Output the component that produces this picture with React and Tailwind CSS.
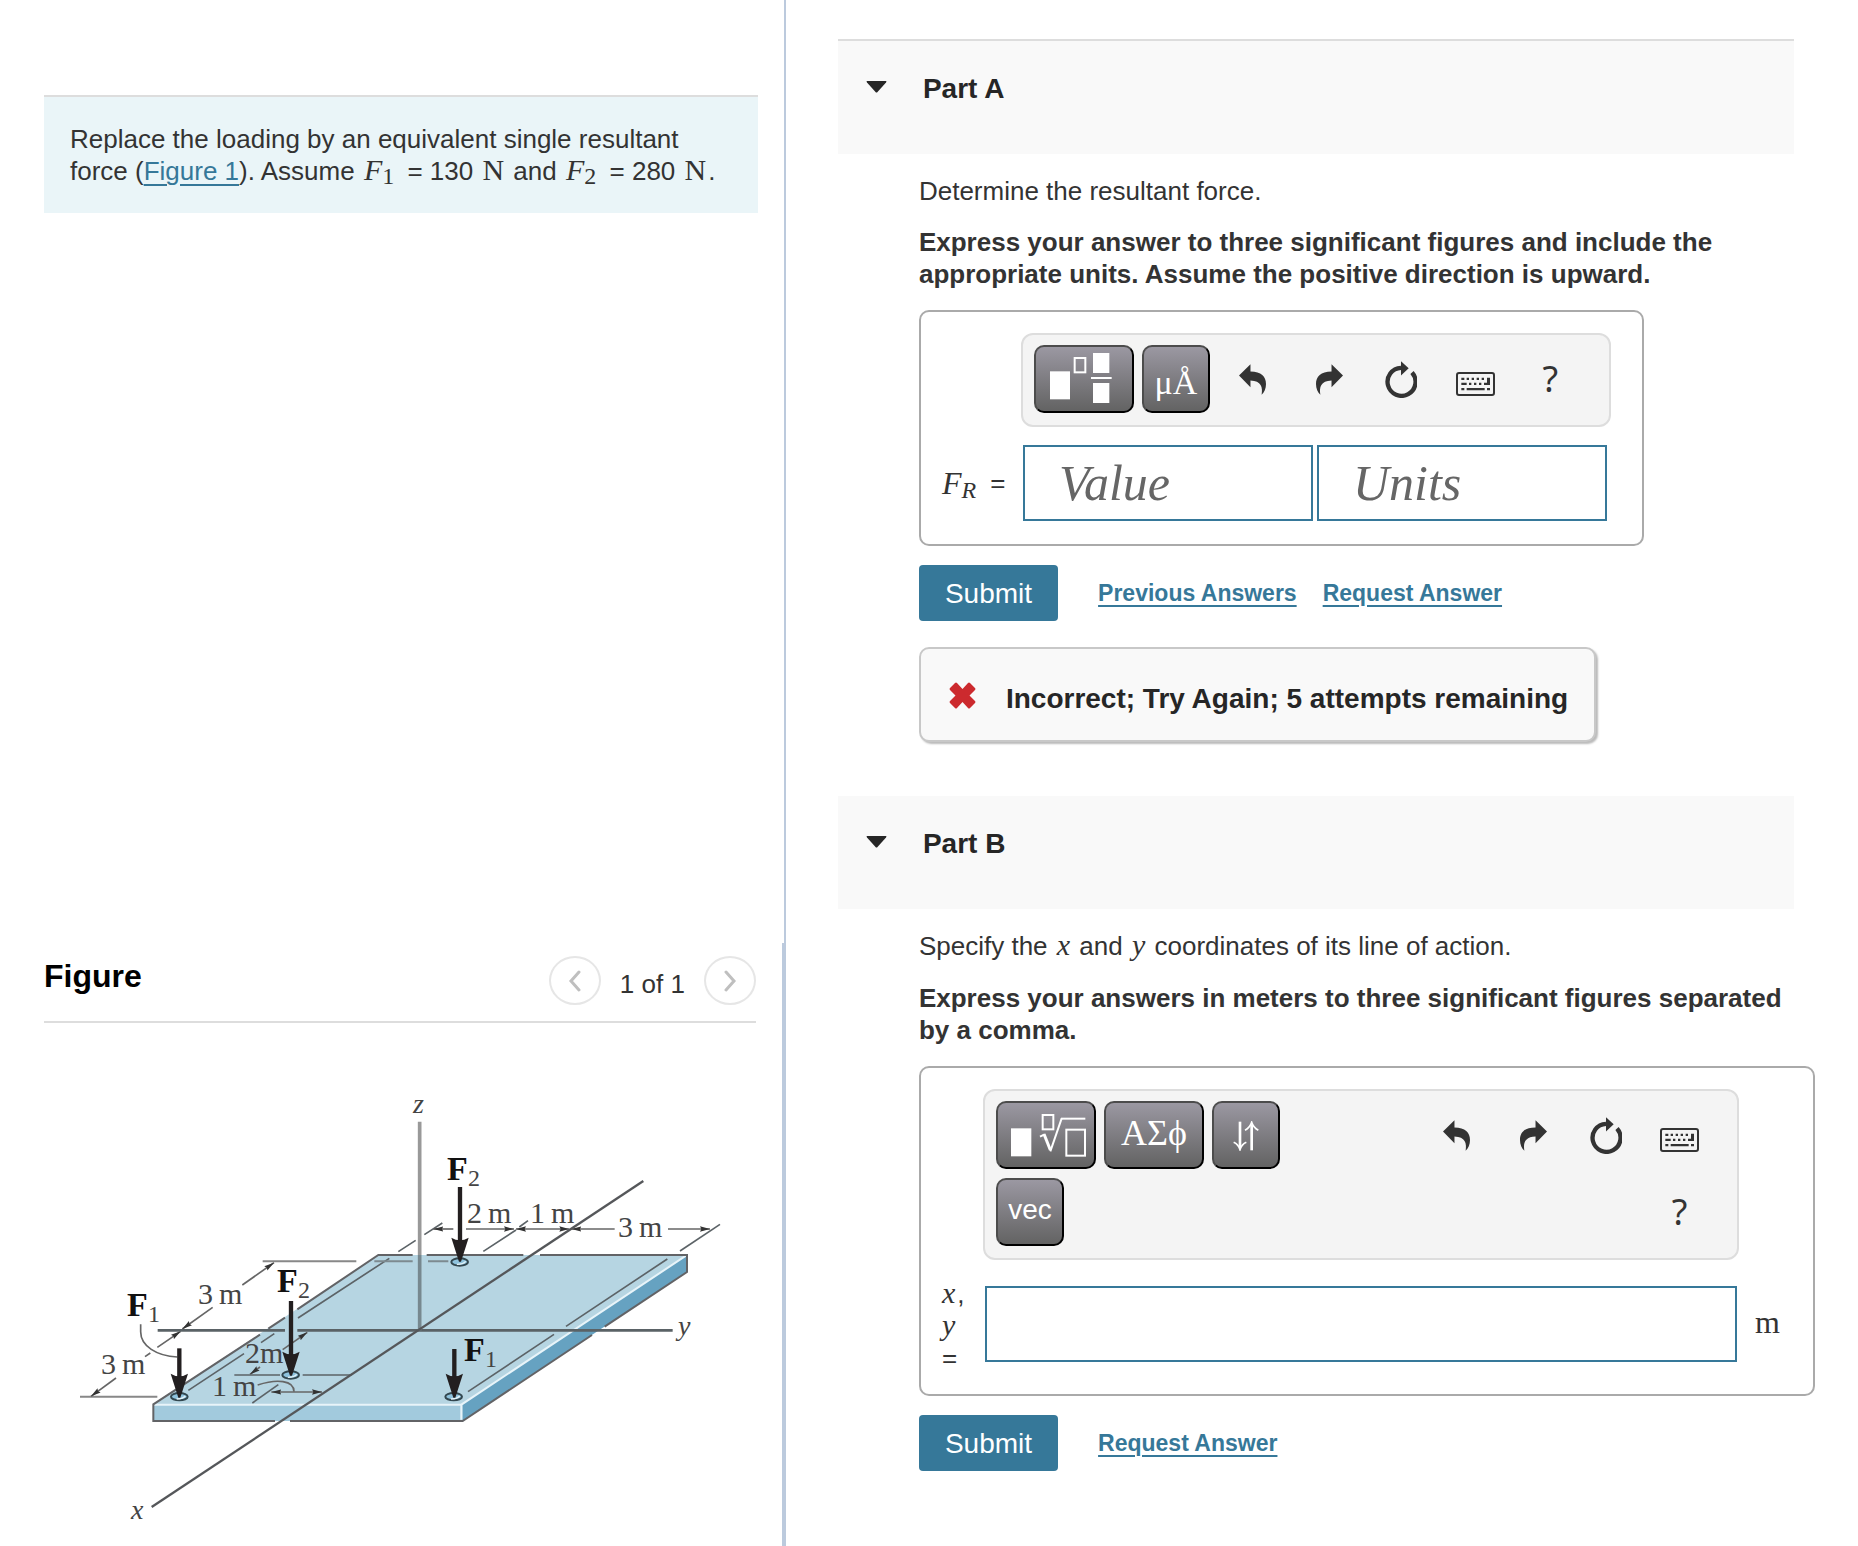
import React from "react";

const SANS = "font-['Liberation_Sans',Arial,sans-serif]";
const MATH = "font-['Liberation_Serif','Times_New_Roman',serif]";

function MathText({ children, sub, upright }) {
  return (
    <span className={`${MATH} mx-0.5 text-[30px] leading-none ${upright ? "" : "italic"}`}>
      {children}
      {sub && <span className="relative top-1 mr-1 text-[24px] not-italic">{sub}</span>}
    </span>
  );
}

function UndoIcon({ flip }) {
  return (
    <svg width="27" height="31" viewBox="0 0 80 90" fill="#333" aria-hidden="true" className={flip ? "ml-1 -scale-x-100" : ""}>
      <path d="M0 33 L34 0 V21 C66 21 80 36 80 58 C80 72 75 82 67 90 C71 68 66 49 34 48 V68 Z" />
    </svg>
  );
}

function ResetIcon() {
  return (
    <svg width="32" height="37" viewBox="0 0 96 110" aria-hidden="true" className="mr-0.5">
      <path d="M81 34 A42 42 0 1 1 48 20" fill="none" stroke="#333" strokeWidth="13" />
      <path d="M48 0 L71 21 L48 43 Z" fill="#333" />
    </svg>
  );
}

function KeyboardIcon() {
  return (
    <svg width="39" height="24" viewBox="0 0 117 72" aria-hidden="true" className="mt-2.5 mr-1">
      <rect x="3" y="3" width="111" height="66" rx="6" fill="none" stroke="#333" strokeWidth="6" />
      <path
        fill="#333"
        d="M16 17h9v7h-9z M32 17h7v7h-7z M47 17h7v7h-7z M62 17h7v7h-7z M77 17h7v7h-7z M93 17h9v22h-18v-7h9z M16 32h16v7H16z M39 32h7v7h-7z M54 32h7v7h-7z M69 32h7v7h-7z M16 48h9v7h-9z M32 48h54v7H32z M93 48h9v7h-9z"
      />
    </svg>
  );
}

function ToolIcon({ label, children }) {
  return (
    <button type="button" aria-label={label} className="flex h-[68px] w-[75px] items-center justify-center">
      {children}
    </button>
  );
}

function HelpIcon() {
  return (
    <ToolIcon label="Help">
      <span className="mr-1 font-['Noto_Sans','Liberation_Sans',sans-serif] text-[36px] leading-9 text-[#333]">?</span>
    </ToolIcon>
  );
}

function HistoryTools() {
  return (
    <>
      <ToolIcon label="Undo"><UndoIcon /></ToolIcon>
      <ToolIcon label="Redo"><UndoIcon flip /></ToolIcon>
      <ToolIcon label="Reset"><ResetIcon /></ToolIcon>
      <ToolIcon label="Keyboard shortcuts"><KeyboardIcon /></ToolIcon>
    </>
  );
}

function PadButton({ label, wide, children }) {
  return (
    <button
      type="button"
      aria-label={label}
      className={`flex h-[68px] items-center justify-center rounded-[10px] border-2 border-t-[#4c4c4c] border-r-black border-b-black border-l-[#4c4c4c] bg-linear-to-b from-[#9b98a2] to-[#636363] text-white ${
        wide ? "w-[100px]" : "w-[68px]"
      }`}
    >
      {children}
    </button>
  );
}

function TemplateIcon() {
  return (
    <svg width="62" height="50" viewBox="0 0 186 150" aria-hidden="true" className="mr-1.5 mb-0.5">
      <g fill="#fff">
        <rect x="0" y="55" width="60" height="84" />
        <rect x="129" y="0" width="49" height="60" />
        <rect x="123" y="72" width="62" height="6" />
        <rect x="129" y="90" width="49" height="60" />
      </g>
      <rect x="74" y="15" width="32" height="43" fill="none" stroke="#fff" strokeWidth="6" />
    </svg>
  );
}

function RootIcon() {
  return (
    <svg width="75" height="43" viewBox="0 0 225 129" aria-hidden="true" className="ml-1.5 shrink-0">
      <rect x="0" y="43" width="61" height="84" fill="#fff" />
      <g fill="none" stroke="#fff" strokeWidth="6">
        <rect x="95" y="3" width="32" height="43" />
        <rect x="166" y="47" width="56" height="78" />
        <path d="M150 14 H223" />
        <path d="M87 68 L101 61" />
        <path d="M99 60 L118 108" strokeWidth="9" />
        <path d="M118 112 L152 13" />
      </g>
    </svg>
  );
}

function ArrowsIcon() {
  return (
    <svg width="26" height="30" viewBox="0 0 78 90" fill="none" stroke="#fff" aria-hidden="true" className="mt-0.5">
      <g strokeWidth="8">
        <path d="M21 2 V80" />
        <path d="M56 88 V10" />
      </g>
      <g strokeWidth="5">
        <path d="M2 64 Q16 70 21 86 Q26 70 40 64" />
        <path d="M36 28 Q51 20 56 4 Q61 20 76 28" />
      </g>
    </svg>
  );
}

function PartHeader({ title, line }) {
  return (
    <h2 className={`mr-16 bg-[#f9f9f9] ${line ? "border-t-2 border-[#ddd]" : ""}`}>
      <button type="button" aria-expanded="true" className="flex h-[113px] w-full items-start pt-8 pl-7 text-left">
        <svg width="21" height="12" viewBox="0 0 21 12" aria-hidden="true" className="mt-2">
          <path d="M1 0 H20 Q21 0 20 1.5 L11.5 11 Q10.5 12 9.5 11 L1 1.5 Q0 0 1 0 Z" fill="#262626" />
        </svg>
        <span className="ml-9 text-[28px] leading-8 font-bold text-[#262626]">{title}</span>
      </button>
    </h2>
  );
}

function Submit() {
  return (
    <button type="submit" className="h-14 rounded-[4px] bg-[#367899] px-[26px] pt-0.5 text-[28px] leading-8 text-white">
      Submit
    </button>
  );
}

function ActionLink({ children }) {
  return (
    <a href="#answers" className="text-[23px] leading-7 font-bold text-[#367899] underline decoration-2 underline-offset-4">
      {children}
    </a>
  );
}

const FIELD =
  "h-[76px] w-0 min-w-0 border-2 border-[#367899] bg-white font-['Liberation_Serif','Times_New_Roman',serif] text-[50px] italic outline-none placeholder:text-[#666] placeholder:opacity-100";

function Force({ x, y1, y2 }) {
  return (
    <g>
      <path d={`M${x} ${y1} V${y2 - 50}`} stroke="#231f20" strokeWidth="13" />
      <path d={`M${x - 26} ${y2 - 72} Q${x} ${y2 - 56} ${x + 26} ${y2 - 72} L${x + 3} ${y2} H${x - 3} Z`} fill="#231f20" />
    </g>
  );
}

function Hole({ x, y }) {
  return (
    <g>
      <ellipse cx={x} cy={y} rx="25" ry="11" fill="#8fc3dd" stroke="#33474f" strokeWidth="6" />
      <path d={`M${x - 8} ${y + 7} Q${x + 12} ${y + 6} ${x + 18} ${y - 2}`} stroke="#e6f3f8" strokeWidth="4" fill="none" />
    </g>
  );
}

function ForceLabel({ x, y, n }) {
  return (
    <>
      <text x={x} y={y} fontSize="34" fontWeight="700" fill="#111">F</text>
      <text x={x + 21} y={y + 6} fontSize="24">{n}</text>
    </>
  );
}

function PlateDiagram() {
  return (
    <svg
      viewBox="0 0 680 460"
      role="img"
      aria-label="Plate loaded by forces F1 and F2"
      className="mt-[58px] ml-4 w-[680px] max-w-full"
    >
      <defs>
        <marker id="tip" viewBox="0 0 30 16" refX="30" refY="8" markerWidth="30" markerHeight="18" markerUnits="userSpaceOnUse" orient="auto-start-reverse">
          <path d="M0 0 L30 8 L0 16 L4 8 Z" fill="#333" />
        </marker>
      </defs>
      <g transform="scale(0.33333)" fill="none">
        <path d="M280 970 L955 522 H1880 L1207 970 Z" fill="#b6d5e2" />
        <path d="M280 970 H1207 V1020 H280 Z" fill="#a2cadd" />
        <path d="M1207 970 L1880 522 V573 L1207 1020 Z" fill="#66a2c1" />
        <path d="M282 971 H1204 L1878 524 M1204 971 V1016" stroke="#e8f4f9" strokeWidth="6" />
        <g stroke="#626366" strokeWidth="6">
          <path d="M645 1020 H280 V970 L600 761 M625 743 L675 710 M712 685 L955 522 H1058 M1100 522 H1390 M1440 522 H1881 V573 L1634 737 M1596 762 L1208 1020 H690" />
        </g>
        <g stroke="#5c6367" strokeWidth="5">
          <path d="M385 928 L552 818 M603 785 L643 758 M714 711 L988 532" />
          <path d="M1224 932 L1482 760 M1518 736 L1822 534" />
          <path d="M943 541 H1058 M1104 541 H1165" stroke="#7d8a90" strokeWidth="6" />
          <path d="M1015 512 L1067 478 M1093 461 L1147 426" />
          <path d="M1270 511 L1368 447 M1378 438 L1404 419" />
          <path d="M1860 510 L1980 430" />
          <path d="M523 882 H660 M728 882 H875" />
          <path d="M577 966 L655 911" />
        </g>
        <g stroke="#888" strokeWidth="6">
          <path d="M608 541 H889 M60 947 H292" />
        </g>
        <g stroke="#666" strokeWidth="5">
          <path d="M547 612 L642 545" markerEnd="url(#tip)" />
          <path d="M458 679 L367 744" markerEnd="url(#tip)" />
          <path d="M255 827 L271 816 M292 799 L362 751" markerEnd="url(#tip)" />
          <path d="M168 891 L93 946" markerEnd="url(#tip)" />
          <path d="M600 858 L570 880" markerEnd="url(#tip)" />
          <path d="M668 806 L742 754" markerEnd="url(#tip)" />
          <path d="M634 933 H786" markerStart="url(#tip)" markerEnd="url(#tip)" />
          <path d="M1180 444 H1120" markerEnd="url(#tip)" />
          <path d="M1218 444 H1362" markerEnd="url(#tip)" />
          <path d="M1368 444 H1528" markerStart="url(#tip)" markerEnd="url(#tip)" />
          <path d="M1664 444 H1534" markerEnd="url(#tip)" />
          <path d="M1824 444 H1950" markerEnd="url(#tip)" />
          <path d="M242 730 V752 C242 795 290 825 352 828" />
          <path d="M593 912 C650 893 702 897 702 932" />
        </g>
        <g stroke="#5a6266">
          <path d="M293 748 H675 M712 748 H1838" strokeWidth="8" />
          <path d="M1079 122 V522" stroke="#999" strokeWidth="11" />
          <path d="M1079 522 V748" stroke="#77888f" strokeWidth="11" />
          <path d="M275 1278 L1750 300" stroke="#55575a" strokeWidth="7" />
        </g>
        <Hole x={358} y={947} />
        <Hole x={692} y={882} />
        <Hole x={1199} y={543} />
        <Hole x={1181} y={947} />
        <Force x={358} y1={802} y2={950} />
        <Force x={693} y1={660} y2={884} />
        <Force x={1200} y1={318} y2={542} />
        <Force x={1183} y1={804} y2={950} />
      </g>
      <g className={MATH} fill="#444" fontSize="30">
        <ForceLabel x={67} y={235} n="1" />
        <ForceLabel x={217} y={211} n="2" />
        <ForceLabel x={387} y={99} n="2" />
        <ForceLabel x={404} y={280} n="1" />
        <text x="138" y="223">3{"\u2009"}m</text>
        <text x="41" y="293">3{"\u2009"}m</text>
        <text x="185" y="282">2m</text>
        <text x="152" y="315">1{"\u2009"}m</text>
        <text x="407" y="142">2{"\u2009"}m</text>
        <text x="470" y="142">1{"\u2009"}m</text>
        <text x="558" y="156">3{"\u2009"}m</text>
        <g fontSize="28" fontStyle="italic">
          <text x="353" y="32">z</text>
          <text x="618" y="254">y</text>
          <text x="71" y="438">x</text>
        </g>
      </g>
    </svg>
  );
}

function PagerButton({ label, d }) {
  return (
    <button type="button" aria-label={label} className="flex h-[49px] w-[52px] items-center justify-center rounded-[50%] border-2 border-[#e6e6e6]">
      <svg width="14" height="22" viewBox="0 0 14 22" fill="none" stroke="#bfbfbf" strokeWidth="3" strokeLinecap="round" aria-hidden="true">
        <path d={d} />
      </svg>
    </button>
  );
}

function LeftPane() {
  return (
    <section className="flex w-[42.3%] shrink-0 flex-col">
      <div className="min-h-[943px] border-r-2 border-[#bccadd] pt-[95px] pr-[26px] pl-11">
        <p className="border-t-2 border-[#ddd] bg-[#eaf5f8] p-[26px] text-[26px] leading-8 text-[#333]">
          Replace the loading by an equivalent single resultant force (
          <a href="#figure" className="text-[#367899] underline decoration-2 underline-offset-4">Figure 1</a>). Assume{" "}
          <MathText sub="1">F</MathText> = 130 <MathText upright>N</MathText> and{" "}
          <MathText sub="2">F</MathText> = 280 <MathText upright>N</MathText>.
        </p>
      </div>
      <div id="figure" className="grow border-r-4 border-[#bccadd] pt-[13px] pr-[26px] pl-11">
        <div className="flex items-start border-b-2 border-[#ddd] pb-4">
          <h2 className="grow text-[32px] leading-10 font-bold text-black">Figure</h2>
          <PagerButton label="Previous figure" d="M11 2 L3 11 L11 20" />
          <span className="mx-[19px] mt-3 text-[26px] leading-8 text-[#333]">1 of 1</span>
          <PagerButton label="Next figure" d="M3 2 L11 11 L3 20" />
        </div>
        <PlateDiagram />
      </div>
    </section>
  );
}

function PartA() {
  return (
    <form onSubmit={(e) => e.preventDefault()}>
      <PartHeader title="Part A" line />
      <div className="mr-16 ml-[81px] text-[26px] leading-8 text-[#333]">
        <p className="mt-[21px]">Determine the resultant force.</p>
        <p className="mt-[19px] font-bold">
          Express your answer to three significant figures and include the appropriate units. Assume the positive
          direction is upward.
        </p>
        <div className="mt-5 w-[725px] max-w-full rounded-[10px] border-2 border-[#aaa] pt-[21px] pb-[23px]">
          <div className="mr-[31px] ml-[100px] flex rounded-xl border-2 border-[#ddd] bg-[#f4f4f4] px-[11px] pt-2.5 pb-3">
            <div className="flex gap-2">
              <PadButton label="Templates" wide><TemplateIcon /></PadButton>
              <PadButton label="Units symbols"><span className={`${MATH} mt-2 text-[34px]`}>μÅ</span></PadButton>
            </div>
            <div className="ml-[5px] flex">
              <HistoryTools />
              <HelpIcon />
            </div>
          </div>
          <div className="mt-[18px] mr-[35px] ml-[21px] flex items-center">
            <label htmlFor="value" className="flex w-[81px] shrink-0 items-center gap-3.5">
              <span className={`${MATH} text-[32px] leading-none italic`}>
                F<span className="relative top-1 text-[24px]">R</span>
              </span>
              =
            </label>
            <div className="flex grow gap-1">
              <input id="value" placeholder="Value" className={`${FIELD} flex-1 pl-[34px]`} />
              <input aria-label="Units" placeholder="Units" className={`${FIELD} flex-1 pl-[34px]`} />
            </div>
          </div>
        </div>
        <div className="mt-[19px] flex items-center gap-6">
          <Submit />
          <div className="ml-4 flex gap-[26px]">
            <ActionLink>Previous Answers</ActionLink>
            <ActionLink>Request Answer</ActionLink>
          </div>
        </div>
        <div className="mt-[26px] flex h-[95px] w-[677px] max-w-full items-center rounded-[10px] border-2 border-[#c8c8c8] bg-[#f9f9f9] pt-0.5 pl-7 shadow-[2px_2px_2px_#bbb]">
          <svg width="27" height="27" viewBox="0 0 27 27" aria-hidden="true">
            <path d="M1 6 L6 1 Q7 0 8 1 L13.500 7 L19 1 Q20 0 21 1 L26 6 Q27 7 26 8 L20.500 13.500 L26 19 Q27 20 26 21 L21 26 Q20 27 19 26 L13.500 20 L8 26 Q7 27 6 26 L1 21 Q0 20 1 19 L6.500 13.500 L1 8 Q0 7 1 6 Z" fill="#cc2a2e" />
          </svg>
          <p className="mt-1.5 ml-[30px] text-[28px] leading-8 font-bold text-[#262626]">
            Incorrect; Try Again; 5 attempts remaining
          </p>
        </div>
      </div>
    </form>
  );
}

function PartB() {
  return (
    <form className="mt-[54px]" onSubmit={(e) => e.preventDefault()}>
      <PartHeader title="Part B" />
      <div className="mr-[43px] ml-[81px] text-[26px] leading-8 text-[#333]">
        <p className="mt-[21px]">
          Specify the <MathText>x</MathText> and <MathText>y</MathText> coordinates of its line of action.
        </p>
        <p className="mt-5 mr-5 font-bold">
          Express your answers in meters to three significant figures separated by a comma.
        </p>
        <div className="mt-5 rounded-[10px] border-2 border-[#aaa] pt-[21px] pb-5">
          <div className="mr-[74px] ml-[62px] flex justify-between rounded-xl border-2 border-[#ddd] bg-[#f4f4f4] pt-2.5 pr-[18px] pb-3 pl-[11px]">
            <div className="flex w-[300px] flex-wrap gap-x-2 gap-y-[9px]">
              <PadButton label="Templates" wide><RootIcon /></PadButton>
              <PadButton label="Greek symbols" wide><span className={`${MATH} mb-1 text-[36px]`}>ΑΣϕ</span></PadButton>
              <PadButton label="Arrows"><ArrowsIcon /></PadButton>
              <PadButton label="Vectors"><span className="mb-1 text-[28px]">vec</span></PadButton>
            </div>
            <div className="flex w-[300px] flex-wrap justify-end gap-y-[9px]">
              <HistoryTools />
              <HelpIcon />
            </div>
          </div>
          <div className="mt-[18px] flex items-start pl-[19px]">
            <label htmlFor="coordinates" className="flex w-[45px] shrink-0 flex-col">
              <span className="h-8"><MathText>x</MathText>,</span>
              <span className="h-8"><MathText>y</MathText></span>
              <span className="h-8 pl-0.5">=</span>
            </label>
            <input id="coordinates" className={`${FIELD} mt-2 grow px-4`} />
            <span className={`${MATH} mt-7 w-[76px] shrink-0 pl-[18px] text-[32px]`}>m</span>
          </div>
        </div>
        <div className="mt-[19px] flex items-center gap-6">
          <Submit />
          <div className="ml-4 flex">
            <ActionLink>Request Answer</ActionLink>
          </div>
        </div>
      </div>
    </form>
  );
}

export default function App() {
  return (
    <main className={`${SANS} flex min-h-screen bg-white`}>
      <LeftPane />
      <section className="min-w-0 grow pt-[39px] pl-[52px]">
        <PartA />
        <PartB />
      </section>
    </main>
  );
}
